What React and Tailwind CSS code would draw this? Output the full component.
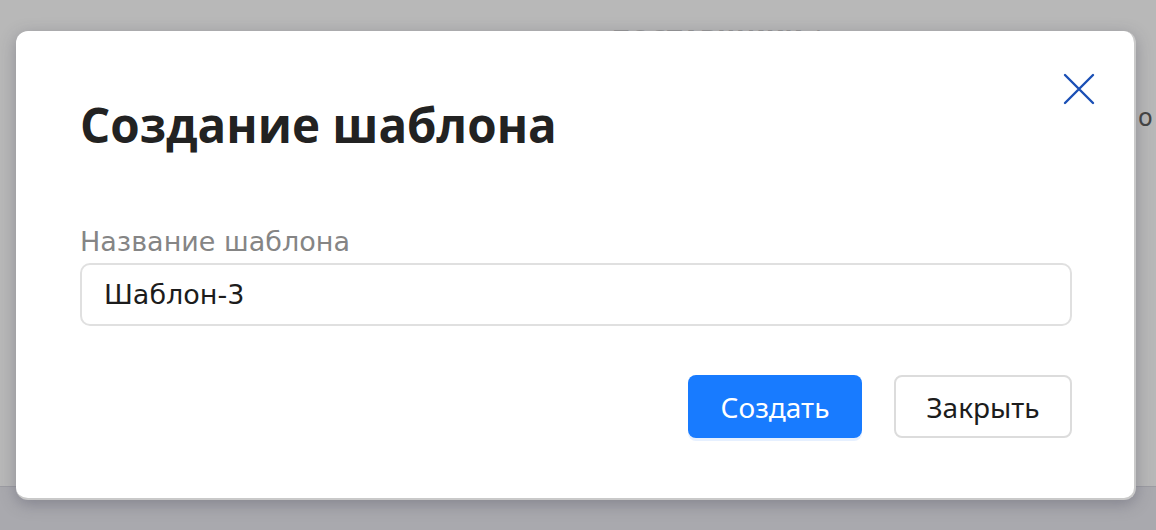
import React, { useState } from 'react';

const CloseIcon = () => (
    <svg width="34" height="34" viewBox="0 0 34 34" fill="none">
        <path d="M3 3L31 31M31 3L3 31" stroke="#1a4fb5" strokeWidth="2.4" strokeLinecap="round" />
    </svg>
);

const App = () => {
    const [name, setName] = useState('Шаблон-3');

    return (
        <div className="relative w-[1156px] h-[530px] overflow-hidden bg-[#b8b8b8]" style={{ fontFamily: '"DejaVu Sans", sans-serif' }}>
            {/* faint page behind the overlay */}
            <div className="absolute inset-0">
                <div className="absolute left-[612px] top-[22px] text-[22px] font-bold tracking-wide text-[#9a9a9a]">ПОСТАВЩИКИ /</div>
                <div className="absolute left-[1138px] top-[100px] text-[24px] text-[#444]">о</div>
                <div className="absolute left-0 right-0 top-[486px] bottom-0 bg-[#a9a9ae] border-t border-[#9c9ca2]"></div>
            </div>

            <div className="relative pl-[16px] pt-[31px]">
                <div className="relative w-[1120px] h-[469px] bg-white rounded-[12px] border-r-2 border-b-2 border-[#c9c9c9] shadow-[0_4px_16px_rgba(60,60,80,0.35)] pl-[64px] pr-[62px] pt-[64px]">
                    <button className="absolute right-[38px] top-[41px] p-0 bg-transparent">
                        <CloseIcon />
                    </button>

                    <h2 className="text-[47.5px] leading-[60px] font-bold text-[#222]" style={{ fontFamily: '"Open Sans", sans-serif' }}>
                        Создание шаблона
                    </h2>

                    <div className="flex flex-col gap-[5px] mt-[71px]">
                        <label className="block text-[27px] leading-[32px] text-[#858585]">Название шаблона</label>
                        <input
                            value={name}
                            onChange={(e) => setName(e.target.value)}
                            className="w-full h-[63px] px-[22px] border-2 border-[#e0e0e0] rounded-[10px] text-[27px] text-[#1c1c1c] outline-none"
                            style={{ fontFamily: '"DejaVu Sans", sans-serif' }}
                        />
                    </div>

                    <div className="flex justify-end gap-[32px] mt-[49px]" style={{ fontFamily: '"Noto Sans", sans-serif' }}>
                        <button className="w-[174px] h-[63px] rounded-[8px] bg-[#187bff] text-white text-[28px] shadow-[0_3px_0_#e6f0ff]">
                            Создать
                        </button>
                        <button className="w-[178px] h-[63px] rounded-[8px] bg-white border-2 border-[#dcdcdc] text-[#1c1c1c] text-[28px]">
                            Закрыть
                        </button>
                    </div>
                </div>
            </div>
        </div>
    );
};

export default App;
